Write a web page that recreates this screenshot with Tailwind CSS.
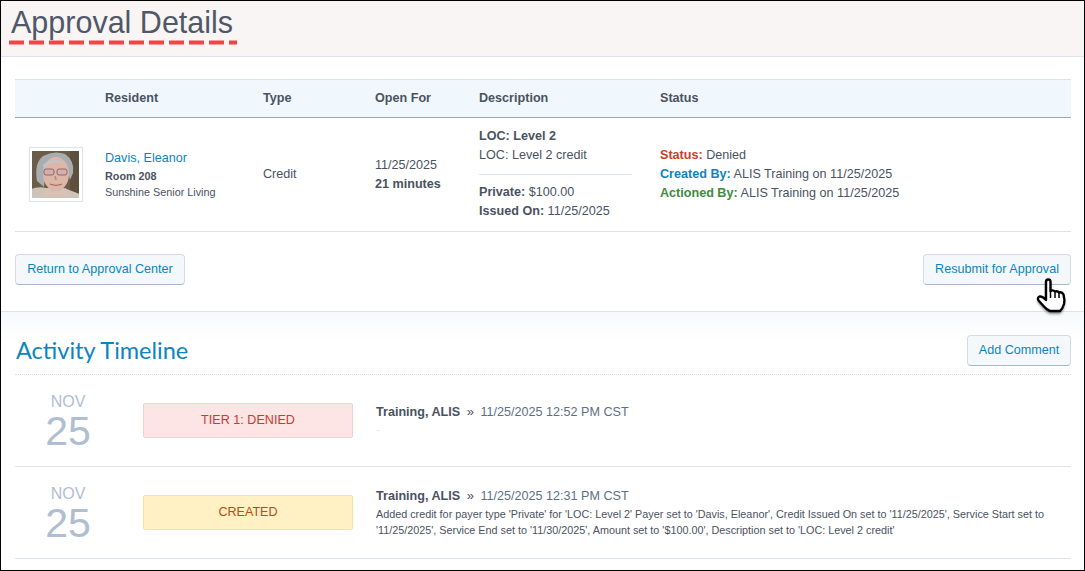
<!DOCTYPE html>
<html lang="en">
<head>
    <meta charset="utf-8">
    <title>Approval Details</title>
    <script src="https://cdn.jsdelivr.net/npm/@tailwindcss/browser@4"></script>
</head>
<body class="bg-white">
<div class="w-[1085px] h-[571px] overflow-hidden border border-black relative font-['Liberation_Sans',Arial,sans-serif] text-[12.6px] text-[#4a5261]">
    <!-- Header -->
    <div class="h-[56px] bg-[#f8f5f4] border-b border-[#dde2ee] pl-[10px] relative">
        <h1 class="text-[30.5px] leading-[42px] text-[#4f5868]">Approval Details</h1>
        <!-- red marker underline -->
        <svg class="absolute left-[5px] top-[35px]" width="236" height="20" viewBox="0 0 236 20">
            <defs><filter id="soft" x="-5%" y="-100%" width="110%" height="300%"><feGaussianBlur stdDeviation="1.400"/></filter></defs>
            <line x1="3" y1="9.500" x2="231" y2="9.500" stroke="#000" stroke-opacity=".6" stroke-width="4" stroke-dasharray="15 5" filter="url(#soft)"/>
            <line x1="3" y1="6.500" x2="231" y2="6.500" stroke="#f44345" stroke-width="4" stroke-dasharray="15 5"/>
        </svg>
    </div>

    <!-- Approval table -->
    <div class="pl-[14px] pr-[13px] pt-[22px]">
        <div class="grid grid-cols-[90px_158px_112px_104px_181px_1fr] h-[39px] items-center bg-[#f0f8fe] border-t border-b border-t-[#dde2ee] border-b-[#9aa5bb] font-bold">
            <div></div>
            <div>Resident</div>
            <div>Type</div>
            <div>Open For</div>
            <div>Description</div>
            <div>Status</div>
        </div>
        <div class="grid grid-cols-[90px_158px_112px_104px_181px_1fr] h-[114px] items-center border-b border-[#dde2ee]">
            <div class="pl-[14px]">
                <div class="w-[54px] h-[55px] border border-[#dde2ee] pl-[2px] pt-[3px]">
                    <svg width="47" height="47" viewBox="0 0 47 47" class="block">
                        <defs>
                            <filter id="photo" x="-10%" y="-10%" width="120%" height="120%"><feGaussianBlur stdDeviation="0.600"/></filter>
                            <clipPath id="crop"><rect width="47" height="47"/></clipPath>
                        </defs>
                        <g clip-path="url(#crop)">
                            <rect width="47" height="47" fill="#6b5c49"/>
                            <g filter="url(#photo)">
                                <rect x="38" y="-2" width="11" height="51" fill="#5d4f3c"/>
                                <path d="M-3 50 V39 Q6 35 14 37 L32 37 Q40 40 50 44 V50Z" fill="#cdc3b7"/>
                                <path d="M5 30 Q2 12 11 5 Q22 -1 33 3 Q43 10 41 22 L38 29 L34 14 Q22 8 14 16 L12 36 Z" fill="#a9adb0"/>
                                <ellipse cx="24" cy="23" rx="13" ry="17" fill="#dcb7a9"/>
                                <path d="M13 38 Q23 44 34 37 L35 46 H12Z" fill="#d8c2b6"/>
                                <path d="M11 14 Q22 4 36 14 Q26 10 19 12 Q14 14 12 20Z" fill="#c2c3c3"/>
                                <rect x="12" y="18" width="10" height="6" rx="2" fill="#d6aeaa" stroke="#7c5560" stroke-width=".8"/>
                                <rect x="25" y="18" width="10" height="6" rx="2" fill="#d6aeaa" stroke="#7c5560" stroke-width=".8"/>
                                <path d="M23 25 L24 29" stroke="#b98a7c" stroke-width="1.500"/>
                                <path d="M18 33 Q24 35.500 30 33" fill="none" stroke="#a5665c" stroke-width="1.100"/>
                            </g>
                        </g>
                    </svg>
                </div>
            </div>
            <div>
                <div class="text-[#0b84bf] leading-[19px]">Davis, Eleanor</div>
                <div class="text-[10.8px] font-bold leading-[16px]">Room 208</div>
                <div class="text-[10.8px] leading-[16px]">Sunshine Senior Living</div>
            </div>
            <div>Credit</div>
            <div class="leading-[19px]">
                <div>11/25/2025</div>
                <div class="font-bold">21 minutes</div>
            </div>
            <div class="leading-[19px] w-[153px] mb-[1px]">
                <div class="font-bold">LOC: Level 2</div>
                <div>LOC: Level 2 credit</div>
                <div class="border-t border-[#dde2ee] mt-[9px] mb-[8px]"></div>
                <div><b>Private:</b> $100.00</div>
                <div><b>Issued On:</b> 11/25/2025</div>
            </div>
            <div class="leading-[19px]">
                <div><b class="text-[#c8402a]">Status:</b> Denied</div>
                <div><b class="text-[#0b84bf]">Created By:</b> ALIS Training on 11/25/2025</div>
                <div><b class="text-[#3f8a40]">Actioned By:</b> ALIS Training on 11/25/2025</div>
            </div>
        </div>
        <div class="flex justify-between pt-[22px]">
            <button class="h-[31px] w-[170px] rounded-[4px] border border-[#d3dbe8] border-b-[#a9b9d0] bg-[#f5f8fb] text-[#0b84bf]">Return to Approval Center</button>
            <button class="h-[31px] w-[148px] rounded-[4px] border border-[#d3dbe8] border-b-[#a9b9d0] bg-[#f5f8fb] text-[#0b84bf]">Resubmit for Approval</button>
        </div>
    </div>

    <!-- Activity timeline -->
    <div class="mt-[26px] border-t border-[#dde2ee] pl-[14px] pr-[13px] bg-gradient-to-b from-[#f8f9fb] to-white to-[30px]">
        <div class="flex justify-between items-end h-[63px] border-b border-dotted border-[#d5dde6] pb-[8px]">
            <h2 class="font-['Lato',sans-serif] text-[23.5px] leading-[30px] text-[#0b84bf] pl-[1px] mb-[1px]">Activity Timeline</h2>
            <button class="h-[31px] w-[104px] rounded-[4px] border border-[#d3dbe8] border-b-[#a9b9d0] bg-[#f5f8fb] text-[#0b84bf]">Add Comment</button>
        </div>

        <div class="grid grid-cols-[128px_233px_1fr] h-[92px] items-center border-b border-[#dde2ee]">
            <div class="text-center text-[#b0bed2] pr-[22px] pt-[5px]">
                <div class="text-[16px] leading-[16px]">NOV</div>
                <div class="text-[41px] leading-[42px]">25</div>
            </div>
            <div class="w-[210px] h-[35px] flex items-center justify-center rounded-[2px] border border-[#f8cfd1] bg-[#fde4e5] text-[#c83a32]">TIER 1: DENIED</div>
            <div class="self-start pt-[28px]">
                <div class="leading-[18px]"><b>Training, ALIS</b> <span class="mx-[3px] text-[13px]">»</span> <span class="text-[#5d6f84]">11/25/2025 12:52 PM CST</span></div>
                <div class="text-[#dcebf3] text-[10.8px] leading-[16px]">-</div>
            </div>
        </div>

        <div class="grid grid-cols-[128px_233px_1fr] h-[92px] items-center border-b border-[#dde2ee]">
            <div class="text-center text-[#b0bed2] pr-[22px] pt-[5px]">
                <div class="text-[16px] leading-[16px]">NOV</div>
                <div class="text-[41px] leading-[42px]">25</div>
            </div>
            <div class="w-[210px] h-[35px] flex items-center justify-center rounded-[2px] border border-[#fbe09a] bg-[#fff1c4] text-[#b94e0c]">CREATED</div>
            <div class="self-start pt-[20px]">
                <div class="leading-[18px] mb-[1px]"><b>Training, ALIS</b> <span class="mx-[3px] text-[13px]">»</span> <span class="text-[#5d6f84]">11/25/2025 12:31 PM CST</span></div>
                <div class="text-[10.8px] leading-[16px] text-[#4a5261]">Added credit for payer type 'Private' for 'LOC: Level 2' Payer set to 'Davis, Eleanor', Credit Issued On set to '11/25/2025', Service Start set to '11/25/2025', Service End set to '11/30/2025', Amount set to '$100.00', Description set to 'LOC: Level 2 credit'</div>
            </div>
        </div>
    </div>

    <!-- hand cursor callout -->
    <svg class="absolute left-[1033px] top-[275px]" width="38" height="42" viewBox="0 0 38 42">
        <defs><filter id="handshadow" x="-20%" y="-20%" width="140%" height="140%"><feGaussianBlur stdDeviation="1.500"/></filter></defs>
        <path d="M12 6 Q12 3.500 14.200 3.500 Q16.500 3.500 16.500 6 V15 Q19 13.500 21 15.500 Q23.500 14.500 25 16.500 Q28 15.500 29.500 18.500 Q31 24 30 28 Q28.500 33 26 35 H16 Q13 34 10 30.500 L4.500 24.500 Q3 21.500 5.500 20.500 Q8.500 20 12 24 Z" fill="#000" fill-opacity=".6" filter="url(#handshadow)" transform="translate(0 2.500)"/>
        <path d="M12 6 Q12 3.500 14.200 3.500 Q16.500 3.500 16.500 6 V15 Q19 13.500 21 15.500 Q23.500 14.500 25 16.500 Q28 15.500 29.500 18.500 Q31 24 30 28 Q28.500 33 26 35 H16 Q13 34 10 30.500 L4.500 24.500 Q3 21.500 5.500 20.500 Q8.500 20 12 24 Z" fill="#fff" stroke="#000" stroke-width="2.400" stroke-linejoin="round"/>
        <path d="M16.500 15 V22 M21 15.500 V22 M25 16.500 V22" stroke="#000" stroke-width="1.500" fill="none"/>
    </svg>
</div>
</body>
</html>
